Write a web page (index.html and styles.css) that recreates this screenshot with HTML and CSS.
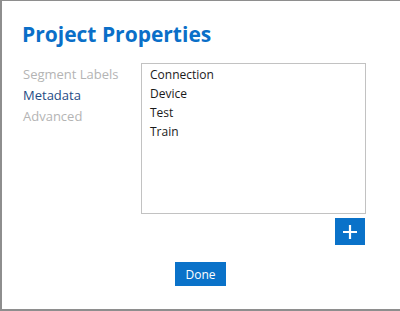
FILE: index.html
```html
<!DOCTYPE html>
<html>
<head>
<meta charset="utf-8">
<link rel="stylesheet" href="styles.css">
</head>
<body>
<div class="dialog">
  <h1 class="title">Project Properties</h1>
  <div class="main">
    <nav class="nav">
      <div class="nav-item muted">Segment Labels</div>
      <div class="nav-item active">Metadata</div>
      <div class="nav-item muted">Advanced</div>
    </nav>
    <div class="content">
      <div class="listbox">
        <div class="list-item">Connection</div>
        <div class="list-item">Device</div>
        <div class="list-item">Test</div>
        <div class="list-item">Train</div>
      </div>
      <div class="add-row">
        <button class="add-btn" aria-label="Add">
          <svg width="16" height="16" viewBox="0 0 16 16"><path d="M8 1v14M1 8h14" stroke="#fff" stroke-width="2.2" fill="none"/></svg>
        </button>
      </div>
    </div>
  </div>
  <div class="footer">
    <button class="done-btn">Done</button>
  </div>
</div>
</body>
</html>
```
FILE: styles.css
```css
html, body {
  margin: 0;
  padding: 0;
  background: #ffffff;
}
body {
  width: 400px;
  height: 311px;
  overflow: hidden;
  font-family: "Open Sans", "Noto Sans", sans-serif;
}
.dialog {
  box-sizing: border-box;
  width: 400px;
  height: 311px;
  border-top: 1px solid #8e8e8e;
  border-left: 2px solid #8e8e8e;
  border-bottom: 2px solid #8e8e8e;
  padding: 19px 0 0 20px;
}
.title {
  margin: 0;
  font-size: 21px;
  font-weight: 700;
  color: #0a6fc8;
  line-height: 28px;
  letter-spacing: 0;
}
.main {
  display: flex;
  margin-top: 15px;
}
.nav {
  width: 118px;
  padding-left: 1px;
  padding-top: 1px;
}
.nav-item {
  font-size: 13px;
  line-height: 21px;
}
.nav-item.muted { color: #b4b4b4; }
.nav-item.active { color: #1f4c85; }
.content {
  width: 225px;
}
.listbox {
  box-sizing: border-box;
  height: 151px;
  border: 1px solid #c2c2c2;
  padding: 1px 0 0 8px;
}
.list-item {
  font-size: 12px;
  line-height: 19px;
  color: #1a1a1a;
}
.add-row {
  display: flex;
  justify-content: flex-end;
  margin-top: 4px;
}
.add-btn {
  width: 30px;
  height: 27px;
  border: none;
  background: #0a72c9;
  padding: 0;
  display: flex;
  align-items: center;
  justify-content: center;
  margin-right: 1px;
}
.footer {
  display: flex;
  margin-top: 17px;
  padding-left: 153px;
}
.done-btn {
  width: 51px;
  height: 24px;
  border: none;
  background: #0a72c9;
  color: #ffffff;
  font-family: "Open Sans", "Noto Sans", sans-serif;
  font-size: 12px;
  padding: 0;
}
```
